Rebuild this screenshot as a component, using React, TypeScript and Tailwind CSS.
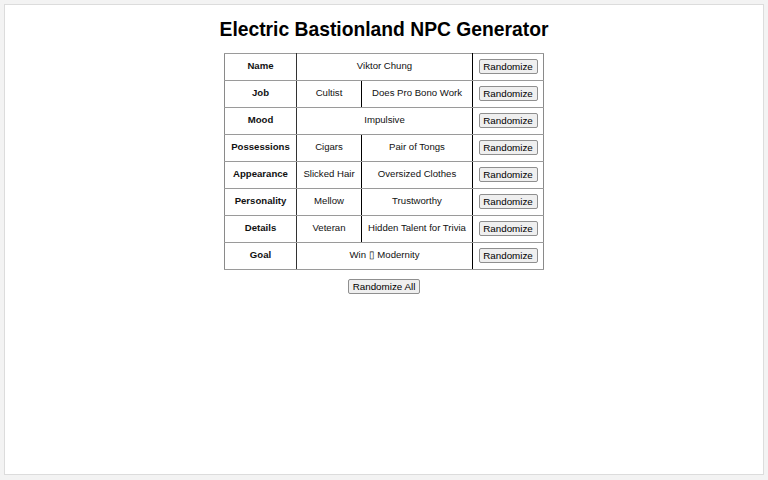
import React from "react";

type Row = { label: string; values: string[] };

const rows: Row[] = [
  { label: "Name", values: ["Viktor Chung"] },
  { label: "Job", values: ["Cultist", "Does Pro Bono Work"] },
  { label: "Mood", values: ["Impulsive"] },
  { label: "Possessions", values: ["Cigars", "Pair of Tongs"] },
  { label: "Appearance", values: ["Slicked Hair", "Oversized Clothes"] },
  { label: "Personality", values: ["Mellow", "Trustworthy"] },
  { label: "Details", values: ["Veteran", "Hidden Talent for Trivia"] },
  { label: "Goal", values: ["Win \u25AF Modernity"] },
];

function Btn({ children, w }: { children: React.ReactNode; w: string }) {
  return (
    <button
      className={`${w} h-[15px] flex items-center justify-center bg-[#efefef] border border-[#8f8f8f] rounded-[2px] text-[9.8px] leading-[13px] text-black px-0`}
    >
      {children}
    </button>
  );
}

export default function App() {
  return (
    <div
      className="min-h-screen bg-[#f3f3f3] p-[4px]"
      style={{ fontFamily: '"Liberation Sans", Arial, sans-serif' }}
    >
      <div className="h-[471px] bg-white border border-[#dcdcdc] flex flex-col items-center">
        <h1 className="mt-[14px] text-[19.3px] leading-[22px] font-bold text-black">
          Electric Bastionland NPC Generator
        </h1>
        <table className="mt-[12px] border-collapse border border-[#8a8a8a] text-[9.6px] text-[#111]">
          <tbody>
            {rows.map((r) => (
              <tr key={r.label} className="h-[27px]">
                <td className="w-[72px] border-y border-[#9a9a9a] border-r border-r-[#333] text-center font-bold p-0 pb-[2px]">
                  {r.label}
                </td>
                {r.values.length === 1 ? (
                  <td
                    colSpan={2}
                    className="border-y border-[#9a9a9a] border-r border-r-black text-center p-0 pb-[2px]"
                  >
                    {r.values[0]}
                  </td>
                ) : (
                  <>
                    <td className="w-[65px] border-y border-[#9a9a9a] border-r border-r-black text-center p-0 pb-[2px]">
                      {r.values[0]}
                    </td>
                    <td className="w-[111px] border-y border-[#9a9a9a] border-r border-r-black text-center p-0 pb-[2px]">
                      {r.values[1]}
                    </td>
                  </>
                )}
                <td className="w-[71px] border-y border-[#9a9a9a] text-center p-0 pb-[2px]">
                  <div className="flex justify-center">
                    <Btn w="w-[59px]">Randomize</Btn>
                  </div>
                </td>
              </tr>
            ))}
          </tbody>
        </table>
        <div className="mt-[9px] flex">
          <Btn w="w-[72px]">Randomize All</Btn>
        </div>
      </div>
    </div>
  );
}
